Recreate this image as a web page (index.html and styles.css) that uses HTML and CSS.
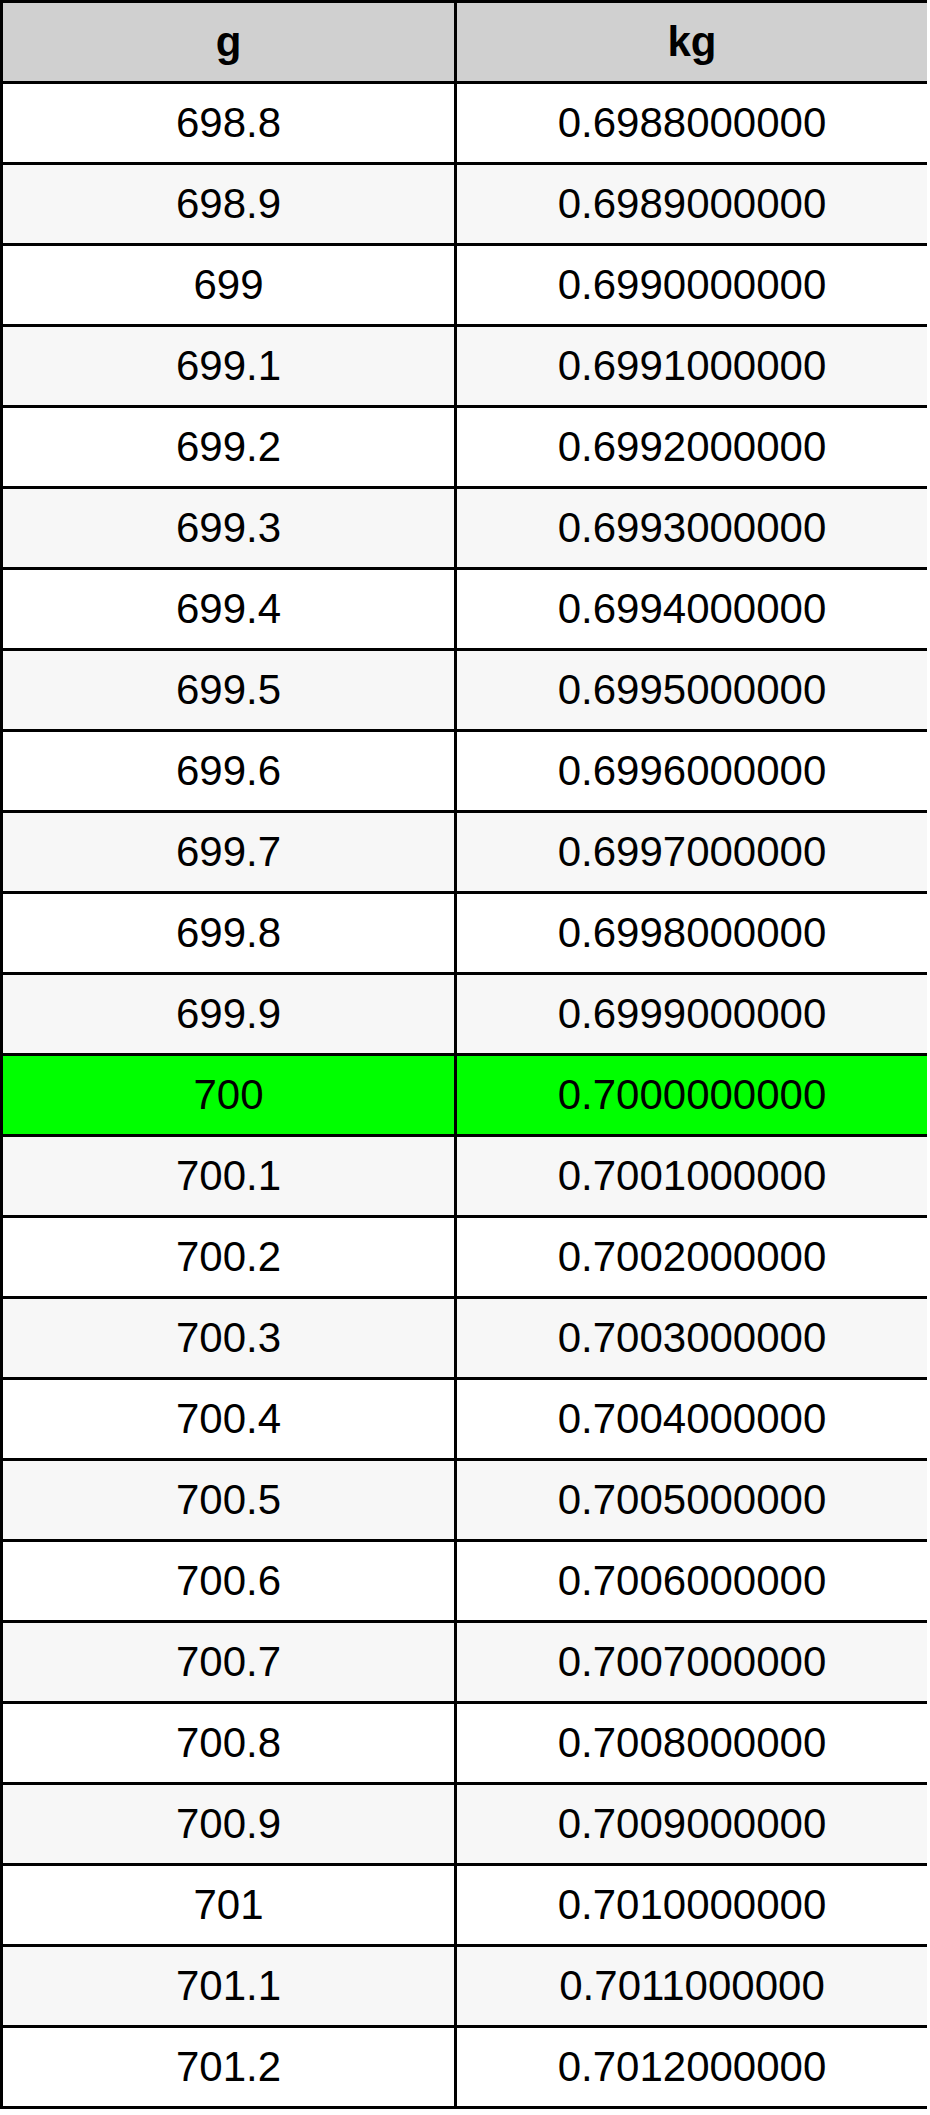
FILE: index.html
```html
<!DOCTYPE html>
<html>
<head>
<meta charset="utf-8">
<title>g to kg</title>
<link rel="stylesheet" href="styles.css">
</head>
<body>
<div class="table">
  <div class="cell head">g</div><div class="cell head">kg</div>
  <div class="cell">698.8</div><div class="cell">0.6988000000</div>
  <div class="cell alt">698.9</div><div class="cell alt">0.6989000000</div>
  <div class="cell">699</div><div class="cell">0.6990000000</div>
  <div class="cell alt">699.1</div><div class="cell alt">0.6991000000</div>
  <div class="cell">699.2</div><div class="cell">0.6992000000</div>
  <div class="cell alt">699.3</div><div class="cell alt">0.6993000000</div>
  <div class="cell">699.4</div><div class="cell">0.6994000000</div>
  <div class="cell alt">699.5</div><div class="cell alt">0.6995000000</div>
  <div class="cell">699.6</div><div class="cell">0.6996000000</div>
  <div class="cell alt">699.7</div><div class="cell alt">0.6997000000</div>
  <div class="cell">699.8</div><div class="cell">0.6998000000</div>
  <div class="cell alt">699.9</div><div class="cell alt">0.6999000000</div>
  <div class="cell hl">700</div><div class="cell hl">0.7000000000</div>
  <div class="cell alt">700.1</div><div class="cell alt">0.7001000000</div>
  <div class="cell">700.2</div><div class="cell">0.7002000000</div>
  <div class="cell alt">700.3</div><div class="cell alt">0.7003000000</div>
  <div class="cell">700.4</div><div class="cell">0.7004000000</div>
  <div class="cell alt">700.5</div><div class="cell alt">0.7005000000</div>
  <div class="cell">700.6</div><div class="cell">0.7006000000</div>
  <div class="cell alt">700.7</div><div class="cell alt">0.7007000000</div>
  <div class="cell">700.8</div><div class="cell">0.7008000000</div>
  <div class="cell alt">700.9</div><div class="cell alt">0.7009000000</div>
  <div class="cell">701</div><div class="cell">0.7010000000</div>
  <div class="cell alt">701.1</div><div class="cell alt">0.7011000000</div>
  <div class="cell">701.2</div><div class="cell">0.7012000000</div>
</div>
</body>
</html>
```

FILE: styles.css
```css
html, body {
  margin: 0;
  padding: 0;
  background: #ffffff;
}

.table {
  display: grid;
  grid-template-columns: 451px 470px;
  grid-auto-rows: 78px;
  gap: 3px;
  padding: 3px;
  width: 921px;
  background: #000000;
  font-family: "Liberation Sans", Arial, sans-serif;
  font-size: 42px;
  color: #000000;
}

.cell {
  display: flex;
  align-items: center;
  justify-content: center;
  background: #ffffff;
}

.cell.alt {
  background: #f7f7f7;
}

.cell.head {
  background: #d0d0d0;
  font-weight: bold;
}

.cell.hl {
  background: #00ff00;
}
```
